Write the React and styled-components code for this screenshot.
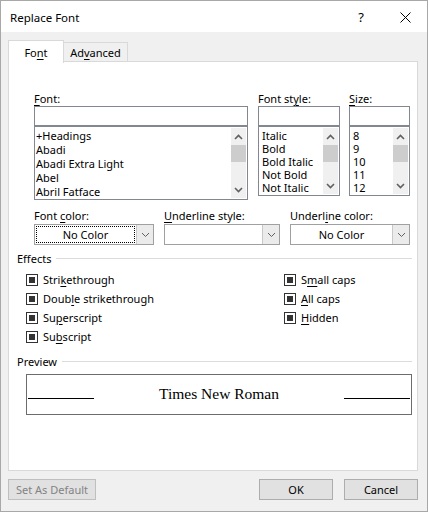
import React from 'react';
import styled, { createGlobalStyle } from 'styled-components';

const GlobalStyle = createGlobalStyle`
  body { margin: 0; background: #ffffff; }
  * { box-sizing: border-box; }
`;

const UI = `"Segoe UI", "Noto Sans", sans-serif`;

const Window = styled.div`
  width: 428px;
  height: 512px;
  display: flex;
  flex-direction: column;
  background: #f0f0f0;
  border: 1px solid #a8a8a8;
  font-family: ${UI};
  font-size: 11px;
  color: #000;
`;

const TitleBar = styled.div`
  height: 31px;
  display: flex;
  align-items: center;
  background: #ffffff;
  padding: 1px 0 0 9px;
`;

const Title = styled.div`
  flex: 1;
  font-size: 11.5px;
`;

const TitleButton = styled.div`
  width: 44px;
  height: 31px;
  display: flex;
  align-items: center;
  justify-content: center;
  font-size: 13px;
`;

const TabStrip = styled.div`
  display: flex;
  align-items: flex-end;
  margin: 7px 0 0 7px;
  height: 23px;
  position: relative;
  z-index: 1;
`;

const Tab = styled.div`
  height: ${p => (p.$active ? '23px' : '20px')};
  width: ${p => p.$w}px;
  margin-left: ${p => (p.$active ? 0 : -1)}px;
  margin-bottom: ${p => (p.$active ? -1 : 0)}px;
  display: flex;
  align-items: center;
  justify-content: center;
  background: ${p => (p.$active ? '#ffffff' : '#f0f0f0')};
  border: 1px solid #d9d9d9;
  border-bottom: ${p => (p.$active ? 'none' : '1px solid #d9d9d9')};
  padding-top: ${p => (p.$active ? 0 : 1)}px;
`;

const Panel = styled.div`
  height: 410px;
  margin: -1px 9px 0 7px;
  background: #ffffff;
  border: 1px solid #d9d9d9;
  padding: 29px 5px 0 8px;
  display: flex;
  flex-direction: column;
`;

const FieldRow = styled.div`
  display: flex;
  gap: ${p => p.$gap || 10}px;
  margin: ${p => p.$top || 0}px 1px 0 17px;
`;

const Field = styled.div`
  width: ${p => p.$w}px;
  margin-left: ${p => p.$ml || 0}px;
  display: flex;
  flex-direction: column;
`;

const Label = styled.div`
  height: 15px;
  line-height: 15px;
  margin-bottom: ${p => p.$mb ?? 0}px;
  white-space: nowrap;
`;

const Key = styled.span`
  text-decoration: underline;
  text-underline-offset: 2px;
`;

const TextBox = styled.div`
  height: 20px;
  border: 1px solid #828790;
  background: #fff;
`;

const ListBox = styled.div`
  height: ${p => p.$h}px;
  border: 1px solid #828790;
  display: flex;
  padding: 1px 1px 1px ${p => p.$pl}px;
  background: #fff;
`;

const ListItems = styled.div`
  flex: 1;
  padding-top: 1px;
`;

const ListItem = styled.div`
  height: ${p => p.$lh}px;
  line-height: ${p => p.$lh}px;
  white-space: nowrap;
`;

const ScrollBar = styled.div`
  width: 15px;
  background: #f0f0f0;
  display: flex;
  flex-direction: column;
`;

const ScrollArrow = styled.div`
  height: 17px;
  display: flex;
  align-items: center;
  justify-content: center;
`;

const Thumb = styled.div`
  height: 17px;
  background: #cdcdcd;
`;

const DropDown = styled.div`
  height: 21px;
  width: ${p => p.$w}px;
  border: 1px solid #a0a0a0;
  background: #fff;
  display: flex;
`;

const DropText = styled.div`
  flex: 1;
  margin: 1px;
  display: flex;
  align-items: center;
  justify-content: center;
  border: 1px dotted ${p => (p.$focus ? '#000' : 'transparent')};
`;

const DropArrow = styled.div`
  width: 17px;
  background: #ebebeb;
  border-left: 1px solid #c8c8c8;
  display: flex;
  align-items: center;
  justify-content: center;
`;

const GroupHeader = styled.div`
  display: flex;
  align-items: center;
  height: 15px;
  margin-top: ${p => p.$top}px;
`;

const GroupLine = styled.div`
  flex: 1;
  height: 1px;
  background: #dcdcdc;
  margin-left: 5px;
`;

const Effects = styled.div`
  display: flex;
  margin: 4px 0 0 9px;
`;

const CheckColumn = styled.div`
  width: ${p => p.$w || 'auto'};
  display: flex;
  flex-direction: column;
`;

const CheckRow = styled.div`
  height: 19px;
  display: flex;
  align-items: center;
  gap: 5px;
`;

const CheckBox = styled.div`
  width: 12px;
  height: 12px;
  border: 1px solid #333;
  display: flex;
  align-items: center;
  justify-content: center;
  &::after {
    content: '';
    width: 6px;
    height: 6px;
    background: #333;
  }
`;

const PreviewBox = styled.div`
  height: 41px;
  margin: 5px 0 0 9px;
  border: 1px solid #6d6d6d;
  display: grid;
  grid-template-columns: 66px 1fr 66px;
  align-items: baseline;
  padding: 9px 1px 0 1px;
`;

const PreviewLine = styled.div`
  border-bottom: 1px solid #000;
`;

const PreviewText = styled.div`
  text-align: center;
  font-family: "Times New Roman", "Liberation Serif", serif;
  font-size: 15.5px;
  line-height: 20px;
`;

const Footer = styled.div`
  display: flex;
  padding: 8px 9px 0 7px;
  gap: 11px;
`;

const Button = styled.div`
  width: ${p => p.$w}px;
  height: 21px;
  background: #e1e1e1;
  border: 1px solid ${p => (p.$disabled ? '#bfbfbf' : '#adadad')};
  color: ${p => (p.$disabled ? '#838383' : '#000')};
  display: flex;
  align-items: center;
  justify-content: center;
`;

const Spacer = styled.div`
  flex: 1;
`;

const Chevron = ({ up, bold }) => (
  <svg width="9" height="6" viewBox="0 0 9 6">
    <polyline
      points={up ? '1,5 4.5,1.5 8,5' : '1,1 4.5,4.5 8,1'}
      fill="none"
      stroke="#606060"
      strokeWidth={bold ? 1.6 : 1}
    />
  </svg>
);

function List({ items, h, lh, pl }) {
  return (
    <ListBox $h={h} $pl={pl}>
      <ListItems>
        {items.map(it => (
          <ListItem key={it} $lh={lh}>{it}</ListItem>
        ))}
      </ListItems>
      <ScrollBar>
        <ScrollArrow><Chevron up bold /></ScrollArrow>
        <Thumb />
        <Spacer />
        <ScrollArrow><Chevron bold /></ScrollArrow>
      </ScrollBar>
    </ListBox>
  );
}

function Check({ children }) {
  return (
    <CheckRow>
      <CheckBox />
      <span>{children}</span>
    </CheckRow>
  );
}

export default function App() {
  return (
    <Window>
      <GlobalStyle />
      <TitleBar>
        <Title>Replace Font</Title>
        <TitleButton>?</TitleButton>
        <TitleButton>
          <svg width="11" height="11" viewBox="0 0 11 11">
            <path d="M0.5 0.5 L10.5 10.5 M10.5 0.5 L0.5 10.5" stroke="#000" strokeWidth="1" />
          </svg>
        </TitleButton>
      </TitleBar>

      <TabStrip>
        <Tab $active $w={56}>Fo<Key>n</Key>t</Tab>
        <Tab $w={65}>Ad<Key>v</Key>anced</Tab>
      </TabStrip>

      <Panel>
        <FieldRow>
          <Field $w={214}>
            <Label><Key>F</Key>ont:</Label>
            <TextBox />
            <List
              h={74}
              lh={14}
              pl={1}
              items={['+Headings', 'Abadi', 'Abadi Extra Light', 'Abel', 'Abril Fatface']}
            />
          </Field>
          <Field $w={82}>
            <Label>Font st<Key>y</Key>le:</Label>
            <TextBox />
            <List
              h={70}
              lh={13}
              pl={3}
              items={['Italic', 'Bold', 'Bold Italic', 'Not Bold', 'Not Italic']}
            />
          </Field>
          <Field $w={61} $ml={-1}>
            <Label><Key>S</Key>ize:</Label>
            <TextBox />
            <List h={70} lh={13} pl={3} items={['8', '9', '10', '11', '12']} />
          </Field>
        </FieldRow>

        <FieldRow $top={8} $gap={10}>
          <Field $w={120}>
            <Label $mb={1}>Font <Key>c</Key>olor:</Label>
            <DropDown $w={120}>
              <DropText $focus>No Color</DropText>
              <DropArrow><Chevron /></DropArrow>
            </DropDown>
          </Field>
          <Field $w={116}>
            <Label $mb={1}><Key>U</Key>nderline style:</Label>
            <DropDown $w={116}>
              <DropText />
              <DropArrow><Chevron /></DropArrow>
            </DropDown>
          </Field>
          <Field $w={120}>
            <Label $mb={1}>Underl<Key>i</Key>ne color:</Label>
            <DropDown $w={120}>
              <DropText>No Color</DropText>
              <DropArrow><Chevron /></DropArrow>
            </DropDown>
          </Field>
        </FieldRow>

        <GroupHeader $top={6}>
          <span>Effects</span>
          <GroupLine />
        </GroupHeader>
        <Effects>
          <CheckColumn $w="258px">
            <Check>Stri<Key>k</Key>ethrough</Check>
            <Check>Doub<Key>l</Key>e strikethrough</Check>
            <Check>Su<Key>p</Key>erscript</Check>
            <Check>Su<Key>b</Key>script</Check>
          </CheckColumn>
          <CheckColumn>
            <Check>S<Key>m</Key>all caps</Check>
            <Check><Key>A</Key>ll caps</Check>
            <Check><Key>H</Key>idden</Check>
          </CheckColumn>
        </Effects>

        <GroupHeader $top={8}>
          <span>Preview</span>
          <GroupLine />
        </GroupHeader>
        <PreviewBox>
          <PreviewLine />
          <PreviewText>Times New Roman</PreviewText>
          <PreviewLine />
        </PreviewBox>
      </Panel>

      <Footer>
        <Button $w={88} $disabled>Set As Default</Button>
        <Spacer />
        <Button $w={74}>OK</Button>
        <Button $w={74}>Cancel</Button>
      </Footer>
    </Window>
  );
}
